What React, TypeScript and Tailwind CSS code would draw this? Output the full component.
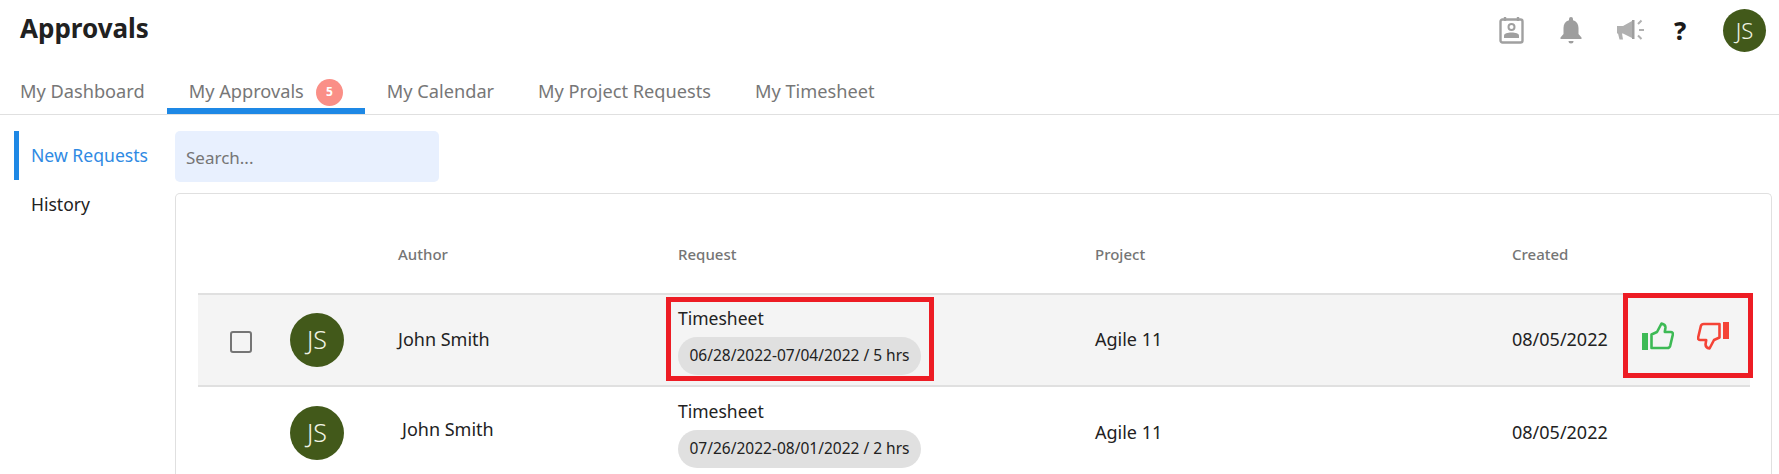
import { ReactNode } from "react";

const tabs = ["My Dashboard", "My Approvals", "My Calendar", "My Project Requests", "My Timesheet"];

function Avatar({ size, text }: { size: string; text: string }) {
  return (
    <div className={`${size} ${text} flex shrink-0 items-center justify-center rounded-full bg-[#42591a] font-light text-[#f0f4e6]`}>
      JS
    </div>
  );
}

function ContactIcon() {
  return (
    <svg width="25" height="28" viewBox="0 0 25 28" fill="none">
      <rect x="1.500" y="3.500" width="22" height="23" rx="2" stroke="#a0a0a0" strokeWidth="2.400" />
      <path d="M6 1v4M19 1v4" stroke="#a0a0a0" strokeWidth="2.400" />
      <circle cx="12.500" cy="11" r="3" stroke="#a0a0a0" strokeWidth="2" />
      <path d="M5 22v-2.500c0-2 3.500-3 7.500-3s7.500 1 7.500 3V22z" fill="#a0a0a0" />
    </svg>
  );
}

function BellIcon() {
  return (
    <svg width="22" height="27" viewBox="0 0 22 27" fill="#9e9e9e">
      <path d="M11 0a2 2 0 0 1 2 2v1.200c3.600 1 5.500 4 5.500 7.800v6l3 3.500V22H.5v-1.500l3-3.500v-6c0-3.800 1.900-6.800 5.500-7.800V2a2 2 0 0 1 2-2z" />
      <path d="M8.500 24h5a2.500 2.500 0 0 1-5 0z" />
    </svg>
  );
}

function MegaphoneIcon() {
  return (
    <svg width="28" height="26" viewBox="0 0 28 26" fill="#b0b0b0">
      <path d="M0 9h6l9-5v17l-9-4.500H5l1 6H2.500L1 16.500H0z" />
      <rect x="15" y="3" width="2.500" height="19" fill="#9e9e9e" />
      <path d="M21 7l3.500-3.500M22 13h5M21 18.500l3.500 3.500" stroke="#b0b0b0" strokeWidth="2" fill="none" />
    </svg>
  );
}

function ThumbUp() {
  return (
    <svg width="32" height="28" viewBox="0 0 32 28" fill="none">
      <rect x="0" y="11" width="6" height="17" fill="#3dba55" />
      <path
        d="M9.500 12.500 15 10 19.500 1.500c3 .5 4.200 2 3.900 4.500L22.800 10h6c1.500 0 2.400 1.200 2 2.800l-2.600 11c-.4 1.400-1.300 2.200-3 2.200H9.500z"
        stroke="#3dba55"
        strokeWidth="2.600"
        strokeLinejoin="round"
      />
    </svg>
  );
}

function ThumbDown() {
  return (
    <svg width="32" height="28" viewBox="0 0 32 28" fill="none">
      <rect x="26" y="0" width="6" height="17" fill="#f44336" />
      <path
        d="M22.500 15.500 17 18 12.500 26.500c-3-.5-4.200-2-3.900-4.500L9.200 18h-6c-1.500 0-2.400-1.200-2-2.800l2.600-11C4.200 2.800 5.100 2 6.800 2h15.700z"
        stroke="#f44336"
        strokeWidth="2.600"
        strokeLinejoin="round"
      />
    </svg>
  );
}

function RequestCell({ dates, top }: { dates: string; top: string }) {
  return (
    <div className={`flex flex-col items-start ${top}`}>
      <div className="text-[17.5px] leading-[24px] text-[#222]">Timesheet</div>
      <div className="mt-[7px] flex h-[38px] w-[243px] items-center justify-center rounded-[19px] bg-[#e0e0e0] text-[15.500px] text-[#222]">
        {dates}
      </div>
    </div>
  );
}

function Row({ children, className }: { children: ReactNode; className: string }) {
  return <div className={`grid grid-cols-[200px_280px_417px_417px_236px] ${className}`}>{children}</div>;
}

export default function App() {
  return (
    <div className="relative h-[474px] w-[1779px] overflow-hidden bg-white font-['Noto_Sans','Open_Sans',sans-serif]">
      <header className="flex h-[60px] items-center justify-between pl-[20px] pr-[13px]">
        <h1 className="pb-[3px] text-[26px] font-bold text-[#212121]">Approvals</h1>
        <div className="flex items-center">
          <ContactIcon />
          <div className="ml-[36px]"><BellIcon /></div>
          <div className="ml-[35px]"><MegaphoneIcon /></div>
          <div className="ml-[29px] w-[13px] text-[25px] font-extrabold leading-none text-[#1a1a1a]">?</div>
          <div className="ml-[36px]">
            <Avatar size="h-[43px] w-[43px]" text="text-[22px]" />
          </div>
        </div>
      </header>

      <nav className="flex h-[55px] items-stretch border-b border-[#e0e0e0] pl-[20px]">
        {tabs.map((tab, i) => (
          <div
            key={tab}
            className={
              i === 0
                ? "flex items-center pr-[22px] pt-[10px] text-[18.2px] text-[#777]"
                : i === 1
                  ? "flex h-[54px] items-center gap-[12px] border-b-[6px] border-[#1e88e5] px-[22px] pt-[16px] text-[18.2px] text-[#777]"
                  : "flex items-center px-[22px] pt-[10px] text-[18.2px] text-[#777]"
            }
          >
            {tab}
            {i === 1 && (
              <span className="flex h-[27px] w-[27px] items-center justify-center rounded-full bg-[#fa8f87] text-[12px] font-bold text-white">
                5
              </span>
            )}
          </div>
        ))}
      </nav>

      <div className="flex">
        <aside className="w-[175px] shrink-0 pt-[16px]">
          <div className="ml-[14px] flex h-[49px] items-center border-l-[5px] border-[#1e88e5] pl-[12px] text-[17.6px] text-[#2f8ae3]">
            New Requests
          </div>
          <div className="ml-[31px] mt-[10px] text-[17.5px] leading-[28px] text-[#222]">History</div>
        </aside>

        <main className="w-[597px] grow pr-[7px] pt-[16px]">
          <div className="flex h-[51px] w-[264px] items-center rounded-[5px] bg-[#e8f0fe] pl-[11px] pt-[2px] text-[17px] text-[#757575]">
            Search...
          </div>

          <section className="mt-[11px] h-[300px] rounded-t-[5px] border border-b-0 border-[#e0e0e0] pl-[22px] pr-[21px] pt-[49px]">
            <Row className="h-[50px] items-start text-[15px] font-medium text-[#757575]">
              <div />
              <div>Author</div>
              <div>Request</div>
              <div>Project</div>
              <div>Created</div>
            </Row>

            <Row className="relative h-[94px] items-center border-y-2 border-[#e0e0e0] bg-[#f4f4f4] text-[18px] text-[#222]">
              <div className="flex items-center pl-[32px]">
                <div className="mt-[3px] h-[22px] w-[22px] rounded-[3px] border-2 border-[#757575]" />
                <div className="ml-[38px]"><Avatar size="h-[54px] w-[54px]" text="text-[25px]" /></div>
              </div>
              <div className="pb-[2px]">John Smith</div>
              <RequestCell dates="06/28/2022-07/04/2022 / 5 hrs" top="" />
              <div className="pb-[2px]">Agile 11</div>
              <div className="pb-[2px]">08/05/2022</div>
              <div className="pointer-events-none absolute left-[468px] top-[2px] h-[84px] w-[268px] border-[5px] border-[#ed1c24]" />
              <div className="absolute left-[1425px] top-[-2px] flex h-[85px] w-[130px] items-center gap-[23px] border-[5px] border-[#ed1c24] pl-[14px]">
                <ThumbUp />
                <ThumbDown />
              </div>
            </Row>

            <Row className="items-start text-[18px] text-[#222]">
              <div className="pl-[92px] pt-[19px]"><Avatar size="h-[54px] w-[54px]" text="text-[25px]" /></div>
              <div className="pl-[4px] pt-[29px]">John Smith</div>
              <RequestCell dates="07/26/2022-08/01/2022 / 2 hrs" top="pt-[12px]" />
              <div className="pt-[32px]">Agile 11</div>
              <div className="pt-[32px]">08/05/2022</div>
            </Row>
          </section>
        </main>
      </div>
    </div>
  );
}
